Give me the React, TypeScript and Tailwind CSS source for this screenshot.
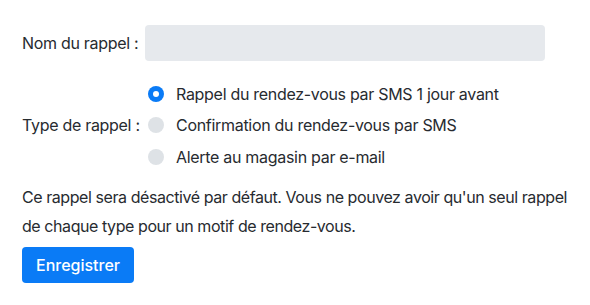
import React, { useState } from "react";

const options = [
  "Rappel du rendez-vous par SMS 1 jour avant",
  "Confirmation du rendez-vous par SMS",
  "Alerte au magasin par e-mail",
];

export default function App() {
  const [selected, setSelected] = useState(0);
  const [name, setName] = useState("");

  return (
    <div
      className="w-[590px] h-[305px] bg-white text-[#272b30] text-[16px] tracking-[-0.3px] pl-[22px] pr-[10px] pt-[25px]"
      style={{ fontFamily: "Inter, 'Noto Sans', sans-serif" }}
    >
      {/* Nom */}
      <div className="flex items-center">
        <label className="w-[123px] shrink-0">Nom du rappel :</label>
        <input
          value={name}
          onChange={(e) => setName(e.target.value)}
          className="w-[400px] h-[36px] rounded-[4px] bg-[#e6e9ed] px-3 outline-none"
        />
      </div>

      {/* Type */}
      <div className="flex items-center mt-[17px]">
        <div className="w-[123px] shrink-0">Type de rappel :</div>
        <div className="flex flex-col pl-[3px]">
          {options.map((opt, i) => (
            <label
              key={opt}
              className="flex items-center h-[31.5px] cursor-pointer"
              onClick={() => setSelected(i)}
            >
              {selected === i ? (
                <span className="w-[16px] h-[16px] rounded-full bg-[#0a7bf6] flex items-center justify-center">
                  <span className="w-[6px] h-[6px] rounded-full bg-white" />
                </span>
              ) : (
                <span className="w-[16px] h-[16px] rounded-full bg-[#dee2e6]" />
              )}
              <span className="ml-[12px]">{opt}</span>
            </label>
          ))}
        </div>
      </div>

      <p className="mt-[10px] leading-[29px] w-[556px] tracking-[-0.43px]">
        Ce rappel sera désactivé par défaut. Vous ne pouvez avoir qu'un seul rappel
        de chaque type pour un motif de rendez-vous.
      </p>

      <button className="mt-[6px] h-[36px] w-[112px] rounded-[4px] bg-[#0a7bf6] text-white font-medium tracking-normal">
        Enregistrer
      </button>
    </div>
  );
}
